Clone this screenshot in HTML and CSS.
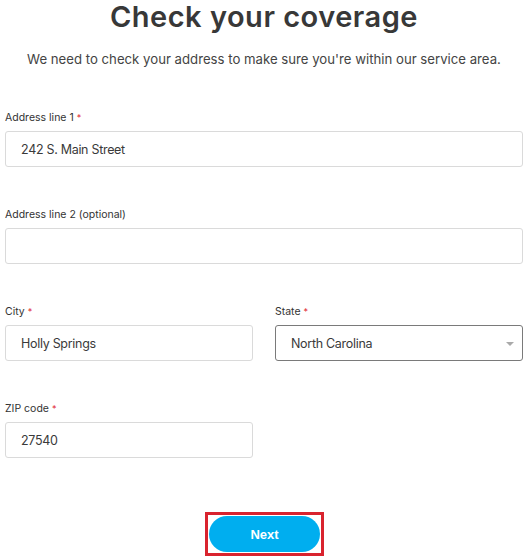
FILE: index.html
```html
<!DOCTYPE html>
<html lang="en">
<head>
<meta charset="utf-8">
<title>Check your coverage</title>
<link rel="stylesheet" href="styles.css">
</head>
<body>
<main class="page">
  <h1 class="title">Check your coverage</h1>
  <p class="subtitle">We need to check your address to make sure you're within our service area.</p>
  <form class="form">
    <div class="field">
      <label class="label">Address line 1<span class="req">*</span></label>
      <div class="input">242 S. Main Street</div>
    </div>
    <div class="field">
      <label class="label">Address line 2 (optional)</label>
      <div class="input"></div>
    </div>
    <div class="row">
      <div class="field">
        <label class="label">City<span class="req">*</span></label>
        <div class="input">Holly Springs</div>
      </div>
      <div class="field">
        <label class="label">State<span class="req">*</span></label>
        <div class="input select">North Carolina<span class="caret"></span></div>
      </div>
    </div>
    <div class="row">
      <div class="field">
        <label class="label">ZIP code<span class="req">*</span></label>
        <div class="input">27540</div>
      </div>
      <div></div>
    </div>
    <div class="actions">
      <div class="highlight"><button type="button" class="next">Next</button></div>
    </div>
  </form>
</main>
</body>
</html>
```
FILE: styles.css
```css
html, body { margin: 0; padding: 0; background: #fff; }
body { font-family: Inter, "Liberation Sans", sans-serif; color: #333; }
.page { width: 529px; padding: 0 6px 0 5px; box-sizing: border-box; }
.title { margin: 0; padding-top: 0; text-align: center; font-size: 29px; line-height: 34px; font-weight: 600; color: #383838; letter-spacing: 0.5px; }
.subtitle { margin: 16px 0 0; text-align: center; font-size: 13.2px; line-height: 18px; color: #444; }
.form { margin-top: 43px; display: flex; flex-direction: column; }
.field { display: flex; flex-direction: column; margin-bottom: 41px; }
.label { font-size: 10.5px; line-height: 14px; color: #333; margin-bottom: 6px; }
.req { color: #e0242f; font-size: 9px; margin-left: 3px; vertical-align: top; }
.input { height: 36px; box-sizing: border-box; border: 1px solid #dadada; border-radius: 3px; padding: 0 15px; display: flex; align-items: center; font-size: 12.5px; letter-spacing: -0.3px; color: #3a3a3a; position: relative; }
.select { border-color: #7a7a7a; }
.caret { position: absolute; right: 8px; top: 16px; width: 0; height: 0; border-left: 4px solid transparent; border-right: 4px solid transparent; border-top: 4px solid #aaa; }
.row { display: grid; grid-template-columns: 248px 248px; column-gap: 22px; }
.actions { display: flex; justify-content: center; margin-top: 13px; padding-left: 1px; }
.highlight { border: 3px solid #d9232e; padding: 1px; display: flex; }
.next { width: 111px; height: 36px; border: none; border-radius: 18px; background: #00aeef; color: #fff; font-family: "Liberation Sans", Arial, sans-serif; font-weight: 700; font-size: 13px; }
```
